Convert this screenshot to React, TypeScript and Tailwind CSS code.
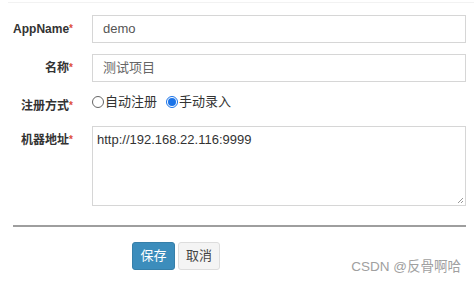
import React from "react";

const font = { fontFamily: '"Liberation Sans", "Noto Sans CJK SC", sans-serif' };

function Label({ text }: { text: string }) {
  return (
    <div className="w-[73px] shrink-0 text-right text-[12px] font-bold text-[#333] leading-[16px]">
      {text}
      <span className="text-[#dd4b39] text-[10px] align-top">*</span>
    </div>
  );
}

function Radio({ checked, label }: { checked: boolean; label: string }) {
  return (
    <div className="flex items-center text-[13px] text-[#333]">
      <span
        className={
          "w-[12px] h-[12px] rounded-full border flex items-center justify-center bg-white " +
          (checked ? "border-[#1a73e8]" : "border-[#666]")
        }
      >
        {checked && <span className="w-[8px] h-[8px] rounded-full bg-[#1a73e8]" />}
      </span>
      <span className="ml-[1px]">{label}</span>
    </div>
  );
}

export default function App() {
  return (
    <div className="relative w-[474px] h-[282px] bg-white overflow-hidden" style={font}>
      <div className="ml-[8px] mt-[2px] h-[1px] bg-[#f2f2f2]" />
      <div className="pt-[12px] flex flex-col">
        <div className="flex items-center h-[28px]">
          <Label text="AppName" />
          <div className="ml-[19px] w-[374px] h-[28px] border border-[#d6d6d6] flex items-center pl-[10px] text-[13px] text-[#555]">
            demo
          </div>
        </div>
        <div className="flex items-center h-[28px] mt-[11px]">
          <Label text="名称" />
          <div className="ml-[19px] w-[374px] h-[28px] border border-[#d6d6d6] flex items-center pl-[10px] text-[13px] text-[#666]">
            测试项目
          </div>
        </div>
        <div className="flex items-start mt-[9px] h-[22px]">
          <div className="mt-[7px]">
            <Label text="注册方式" />
          </div>
          <div className="ml-[19px] flex items-center gap-[9px] mt-[1px]">
            <Radio checked={false} label="自动注册" />
            <Radio checked={true} label="手动录入" />
          </div>
        </div>
        <div className="flex items-start mt-[13px]">
          <div className="mt-[6px]">
            <Label text="机器地址" />
          </div>
          <div className="relative ml-[19px] w-[374px] h-[80px] border border-[#d6d6d6] pl-[4px] pt-[3px] text-[13px] text-[#333]">
            http://192.168.22.116:9999
            <svg className="absolute right-[1px] bottom-[1px]" width="8" height="8" viewBox="0 0 8 8">
              <path d="M7 2 L2 7 M7 5 L5 7" stroke="#999" strokeWidth="1" />
            </svg>
          </div>
        </div>
        <div className="ml-[13px] w-[453px] h-[2px] bg-[#9e9e9e] mt-[19px]" />
        <div className="flex ml-[132px] mt-[15px] gap-[3px]">
          <div className="w-[43px] h-[28px] rounded-[3px] bg-[#3c8dbc] border border-[#367fa9] text-white text-[13px] flex items-center justify-center">
            保存
          </div>
          <div className="w-[42px] h-[28px] rounded-[3px] bg-[#f4f4f4] border border-[#ddd] text-[#444] text-[13px] flex items-center justify-center">
            取消
          </div>
        </div>
      </div>
      <div className="absolute right-[13px] bottom-[5px] text-[13.5px] text-[#a0a0a0]">CSDN @反骨啊哈</div>
    </div>
  );
}
